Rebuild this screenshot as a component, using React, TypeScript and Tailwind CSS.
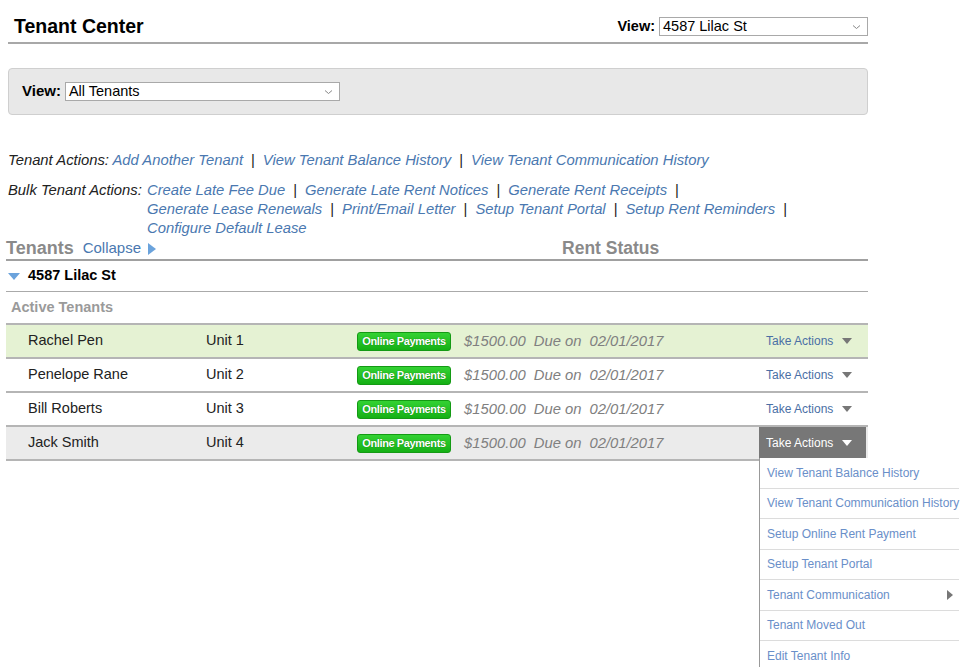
import React from "react";

const tenants = [
  { name: "Rachel Pen", unit: "Unit 1", bg: "bg-[#e5f2d3]" },
  { name: "Penelope Rane", unit: "Unit 2", bg: "bg-white" },
  { name: "Bill Roberts", unit: "Unit 3", bg: "bg-white" },
  { name: "Jack Smith", unit: "Unit 4", bg: "bg-[#ebebeb]", open: true },
];

const menuItems = [
  "View Tenant Balance History",
  "View Tenant Communication History",
  "Setup Online Rent Payment",
  "Setup Tenant Portal",
  "Tenant Communication",
  "Tenant Moved Out",
  "Edit Tenant Info",
];

function Chevron() {
  return (
    <svg width="9" height="6" viewBox="0 0 9 6" className="shrink-0">
      <path d="M1 1.5 L4.5 4.5 L8 1.5" fill="none" stroke="#888" strokeWidth="1" />
    </svg>
  );
}

function FakeSelect({ value, width }: { value: string; width: string }) {
  return (
    <div className={`${width} h-[19px] flex items-center justify-between border border-[#a9a9a9] bg-white pl-[3px] pr-[6px] text-[14.5px] text-black`}>
      <span className="leading-none">{value}</span>
      <Chevron />
    </div>
  );
}

function Sep() {
  return <span className="not-italic text-[#222] mx-[8px]">|</span>;
}

function A({ children }: { children: React.ReactNode }) {
  return <a className="text-[#4a78b0] italic cursor-pointer">{children}</a>;
}

function TriDown({ color }: { color: string }) {
  return (
    <svg width="10" height="6" viewBox="0 0 10 6">
      <path d="M0 0 H10 L5 6 Z" fill={color} />
    </svg>
  );
}

export default function App() {
  return (
    <div className="relative w-[960px] h-[667px] overflow-hidden bg-white text-black font-['Liberation_Sans',Arial,sans-serif]">
      <div className="ml-[6px] w-[862px]">
        {/* header */}
        <div className="ml-[2px] h-[44px] pt-[11px] flex items-center justify-between border-b-2 border-[#a8a8a8]">
          <h1 className="pl-[6px] text-[19.5px] font-bold leading-none">Tenant Center</h1>
          <div className="flex items-center gap-[4px]">
            <span className="text-[14.5px] font-bold">View:</span>
            <FakeSelect value="4587 Lilac St" width="w-[209px]" />
          </div>
        </div>

        {/* view filter */}
        <div className="ml-[2px] mt-[24px] h-[47px] rounded-[4px] border border-[#cfcfcf] bg-[#e8e8e8] pl-[13px] flex items-center gap-[4px]">
          <span className="text-[15px] font-bold">View:</span>
          <FakeSelect value="All Tenants" width="w-[275px]" />
        </div>

        {/* actions */}
        <div className="ml-[2px] mt-[36px] text-[14.8px] leading-[19px]">
          <div>
            <span className="italic text-[#222]">Tenant Actions: </span>
            <A>Add Another Tenant</A>
            <Sep />
            <A>View Tenant Balance History</A>
            <Sep />
            <A>View Tenant Communication History</A>
          </div>
          <div className="mt-[11px] flex">
            <span className="italic text-[#222] w-[139px] shrink-0 whitespace-nowrap">Bulk Tenant Actions: </span>
            <div>
              <div>
                <A>Create Late Fee Due</A>
                <Sep />
                <A>Generate Late Rent Notices</A>
                <Sep />
                <A>Generate Rent Receipts</A>
                <Sep />
              </div>
              <div>
                <A>Generate Lease Renewals</A>
                <Sep />
                <A>Print/Email Letter</A>
                <Sep />
                <A>Setup Tenant Portal</A>
                <Sep />
                <A>Setup Rent Reminders</A>
                <Sep />
              </div>
              <div>
                <A>Configure Default Lease</A>
              </div>
            </div>
          </div>
        </div>

        {/* tenants header */}
        <div className="h-[23px] flex items-center border-b-2 border-[#a0a0a0]">
          <span className="text-[18px] font-bold text-[#8a8a8a]">Tenants</span>
          <span className="ml-[9px] text-[15px] text-[#4a78b0]">Collapse</span>
          <svg width="8" height="12" viewBox="0 0 8 12" className="ml-[7px]">
            <path d="M0 0 L8 6 L0 12 Z" fill="#6ba3dc" />
          </svg>
          <span className="ml-[406px] text-[17.5px] font-bold text-[#8a8a8a]">Rent Status</span>
        </div>

        <div className="h-[31px] flex items-center border-b border-[#aaaaaa] pl-[2px]">
          <svg width="12" height="7" viewBox="0 0 12 7">
            <path d="M0 0 H12 L6 7 Z" fill="#6ba3dc" />
          </svg>
          <span className="ml-[8px] text-[14.5px] font-bold">4587 Lilac St</span>
        </div>

        <div className="h-[31px] flex items-center pl-[5px] text-[14.5px] font-bold text-[#9a9a9a]">
          Active Tenants
        </div>

        {/* rows */}
        <div className="border-b-2 border-[#b5b5b5]">
          {tenants.map((t) => (
            <div key={t.name} className={`h-[34px] border-t-2 border-[#b5b5b5] flex items-center text-[14.5px] ${t.bg}`}>
              <span className="pl-[22px] w-[200px] text-[#222]">{t.name}</span>
              <span className="w-[151px] text-[#222]">{t.unit}</span>
              <span className="w-[94px] h-[19px] rounded-[3px] border border-[#149a14] bg-gradient-to-b from-[#33d233] to-[#14b014] text-white text-[11px] font-bold tracking-[-0.4px] flex items-center justify-center [text-shadow:0_0_1px_#0a700a]">
                Online Payments
              </span>
              <span className="ml-[13px] text-[14.8px] italic text-[#808080] flex gap-[8px]">
                <span>$1500.00</span>
                <span>Due on</span>
                <span>02/01/2017</span>
              </span>
              {t.open ? (
                <span className="ml-auto mr-[2px] w-[107px] h-full bg-[#777777] flex items-center pl-[7px] text-[12px] text-white">
                  Take Actions
                  <span className="ml-[9px]"><TriDown color="#ffffff" /></span>
                </span>
              ) : (
                <span className="ml-auto mr-[2px] w-[107px] flex items-center pl-[7px] text-[12px] text-[#4a6fa5]">
                  Take Actions
                  <span className="ml-[9px]"><TriDown color="#777777" /></span>
                </span>
              )}
            </div>
          ))}
        </div>
      </div>

      {/* dropdown menu */}
      <div className="absolute left-[759px] top-[458px] w-[200px] bg-white border-l border-[#999] text-[12px] text-[#6a8fc9]">
        {menuItems.map((m) => (
          <div key={m} className="h-[30.5px] flex items-center pl-[7px] pr-[6px] border-b border-[#dcdcdc] whitespace-nowrap">
            <span>{m}</span>
            {m === "Tenant Communication" && (
              <svg width="6" height="10" viewBox="0 0 6 10" className="ml-auto">
                <path d="M0 0 L6 5 L0 10 Z" fill="#777" />
              </svg>
            )}
          </div>
        ))}
      </div>
    </div>
  );
}
